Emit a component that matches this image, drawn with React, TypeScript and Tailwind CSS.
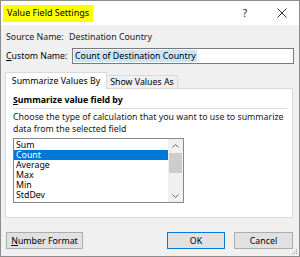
import React from "react";

export default function App() {
  const items = ["Sum", "Count", "Average", "Max", "Min", "StdDev"];
  return (
    <div className="w-[300px] h-[257px] border border-[#8c8c8c] bg-[#f0f0f0] flex flex-col font-['Noto_Sans',sans-serif] text-[8.8px] leading-[12px] text-black relative overflow-hidden whitespace-nowrap">
      {/* Title bar */}
      <div className="h-[24px] bg-white flex items-center justify-between pl-[2px] shrink-0">
        <div className="h-[17px] bg-[#ffff00] flex items-center px-[4px] text-[9px]">Value Field Settings</div>
        <div className="flex items-center h-full">
          <span className="w-[10px] text-center text-[10px] text-[#222]">?</span>
          <svg className="ml-[27px] mr-[12px]" width="10" height="10" viewBox="0 0 10 10">
            <path d="M0.5 0.5 L9.5 9.5 M9.5 0.5 L0.5 9.5" stroke="#333" strokeWidth="1" />
          </svg>
        </div>
      </div>

      {/* Source name */}
      <div className="mt-[6px] h-[12px] flex items-center pl-[5px] text-[#1a1a1a]">
        <span className="w-[63px]">Source Name:</span>
        <span>Destination Country</span>
      </div>

      {/* Custom name */}
      <div className="mt-[5px] h-[16px] flex items-center pl-[5px] pr-[5px]">
        <span className="w-[66px]">
          <span className="underline">C</span>ustom Name:
        </span>
        <div className="flex-1 h-[16px] bg-white border border-[#7a7a7a] flex items-center pl-[1px]">
          <span className="bg-[#cce4f7] px-[1px] leading-[12px]">Count of Destination Country</span>
        </div>
      </div>

      {/* Tabs */}
      <div className="mt-[8px] ml-[4px] flex items-end h-[16px] relative z-10">
        <div className="w-[102px] h-[17px] -mb-px bg-white border border-b-0 border-[#d9d9d9] flex items-center justify-center">
          Summarize Values By
        </div>
        <div className="w-[71px] h-[13px] border border-l-0 border-b-0 border-[#d9d9d9] flex items-center justify-center">
          Show Values As
        </div>
      </div>

      {/* Panel */}
      <div className="ml-[4px] w-[288px] h-[130px] bg-white border border-[#d9d9d9] flex flex-col pl-[7px] pr-[5px]">
        <div className="mt-[5px] h-[12px] font-bold">
          <span className="underline">S</span>ummarize value field by
        </div>
        <div className="mt-[2px] h-px bg-[#dcdcdc]" />
        <div className="mt-[2px] text-[#1a1a1a]">
          <div className="h-[12px]">Choose the type of calculation that you want to use to summarize</div>
          <div className="h-[12px]">data from the selected field</div>
        </div>
        {/* Listbox */}
        <div className="mt-[3px] w-[171px] h-[65px] border border-[#828790] flex bg-white">
          <div className="flex-1 pt-px overflow-hidden">
            {items.map((it, i) => (
              <div
                key={it}
                className={
                  i === 1
                    ? "h-[10px] leading-[10px] pl-[2px] bg-[#0078d7] text-white"
                    : "h-[10px] leading-[10px] pl-[2px]"
                }
              >
                {it}
              </div>
            ))}
          </div>
          <div className="w-[15px] bg-[#f0f0f0] flex flex-col items-center">
            <svg className="mt-[5px]" width="7" height="4" viewBox="0 0 7 4">
              <path d="M0.5 3.5 L3.5 0.5 L6.5 3.5" stroke="#606060" fill="none" strokeWidth="1" />
            </svg>
            <div className="mt-[5px] w-[13px] h-[20px] bg-[#cdcdcd]" />
            <div className="flex-1" />
            <svg className="mb-[4px]" width="7" height="4" viewBox="0 0 7 4">
              <path d="M0.5 0.5 L3.5 3.5 L6.5 0.5" stroke="#606060" fill="none" strokeWidth="1" />
            </svg>
          </div>
        </div>
      </div>

      {/* Buttons */}
      <div className="mt-[14px] h-[17px] flex pl-[5px] pr-[6px]">
        <button className="w-[77px] h-[17px] bg-[#e1e1e1] border border-[#adadad] text-[8.8px] leading-[12px] flex items-center justify-center whitespace-nowrap">
          <span className="underline">N</span>umber Format
        </button>
        <div className="flex-1" />
        <button className="w-[58px] h-[17px] bg-[#e1e1e1] border border-[#0078d7] text-[8.8px] leading-[12px] flex items-center justify-center">
          OK
        </button>
        <button className="ml-[9px] w-[59px] h-[17px] bg-[#e1e1e1] border border-[#adadad] text-[8.8px] leading-[12px] flex items-center justify-center">
          Cancel
        </button>
      </div>

      {/* Resize grip */}
      <svg className="absolute right-[1px] bottom-[1px]" width="6" height="6" viewBox="0 0 6 6">
        <rect x="4" y="0" width="1" height="1" fill="#999" />
        <rect x="2" y="2" width="1" height="1" fill="#999" />
        <rect x="4" y="2" width="1" height="1" fill="#999" />
        <rect x="0" y="4" width="1" height="1" fill="#999" />
        <rect x="2" y="4" width="1" height="1" fill="#999" />
        <rect x="4" y="4" width="1" height="1" fill="#999" />
      </svg>
    </div>
  );
}
